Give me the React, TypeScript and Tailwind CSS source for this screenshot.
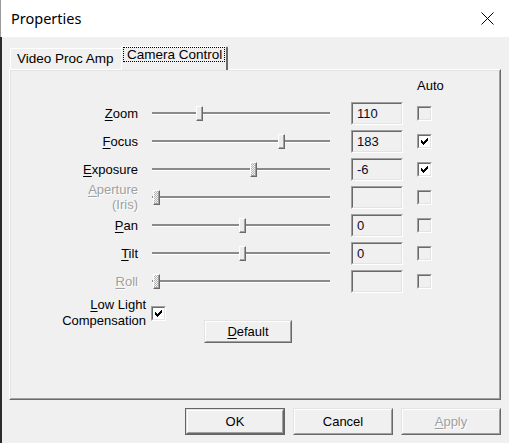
import type { ReactNode } from "react"

interface Row {
  label: ReactNode
  value: string
  thumb: number
  auto: boolean
  disabled?: boolean
  dotted?: boolean
}

const U = ({ children }: { children: ReactNode }) => <span className="underline underline-offset-[2px]">{children}</span>

const rows: Row[] = [
  { label: <><U>Z</U>oom</>, value: "110", thumb: 44, auto: false },
  { label: <><U>F</U>ocus</>, value: "183", thumb: 126, auto: true },
  { label: <><U>E</U>xposure</>, value: "-6", thumb: 98, auto: true, dotted: true },
  {
    label: (
      <>
        <U>A</U>perture
        <br />
        (Iris)
      </>
    ),
    value: "",
    thumb: 1,
    auto: false,
    disabled: true,
    dotted: true,
  },
  { label: <><U>P</U>an</>, value: "0", thumb: 87, auto: false },
  { label: <><U>T</U>ilt</>, value: "0", thumb: 87, auto: false },
  { label: <><U>R</U>oll</>, value: "", thumb: 1, auto: false, disabled: true, dotted: true },
]

function Check() {
  // classic 7x7 tick
  const cells = [
    [6, 0, 1], [5, 1, 2], [0, 2, 1], [4, 2, 3], [0, 3, 2], [3, 3, 3], [0, 4, 5], [1, 5, 3], [2, 6, 1],
  ]
  return (
    <svg width="7" height="7" viewBox="0 0 7 7" shapeRendering="crispEdges">
      {cells.map(([x, y, w], i) => (
        <rect key={i} x={x} y={y} width={w} height={1} fill="#000" />
      ))}
    </svg>
  )
}

function CheckBox({ checked }: { checked: boolean }) {
  return (
    <div className="w-[15px] h-[15px] border border-t-[#a0a0a0] border-l-[#a0a0a0] border-r-white border-b-white">
      <div
        className={`w-full h-full border border-t-[#696969] border-l-[#696969] border-r-[#e3e3e3] border-b-[#e3e3e3] flex items-center justify-center ${
          checked ? "bg-white" : "bg-[#f0f0f0]"
        }`}
      >
        {checked && <Check />}
      </div>
    </div>
  )
}

function Slider({ thumb, dotted }: { thumb: number; dotted?: boolean }) {
  return (
    <div className="relative w-[178px] h-[15px] flex items-center">
      <div className="w-full h-[3px] bg-[#8a8a8a] border-b border-white" />
      <div
        className="absolute top-0 w-[7px] h-[15px] border border-t-white border-l-white border-r-[#696969] border-b-[#696969]"
        style={{ left: thumb }}
      >
        <div
          className={`w-full h-full border-r border-b border-[#a0a0a0] ${
            dotted
              ? "bg-[image:repeating-conic-gradient(#b4b4b4_0%_25%,#f4f4f4_0%_50%)] bg-[length:2px_2px]"
              : "bg-[#ececec]"
          }`}
        />
      </div>
    </div>
  )
}

function Button({ children, isDefault, disabled, className = "" }: { children: ReactNode; isDefault?: boolean; disabled?: boolean; className?: string }) {
  const face = (
    <div className="w-full h-full border border-t-[#e3e3e3] border-l-[#e3e3e3] border-r-[#696969] border-b-[#696969]">
      <div
        className={`w-full h-full border border-t-white border-l-white border-r-[#a0a0a0] border-b-[#a0a0a0] flex items-center justify-center ${
          disabled ? "text-[#a0a0a0] [text-shadow:1px_1px_0_#fff]" : "text-black"
        }`}
      >
        {children}
      </div>
    </div>
  )
  return (
    <div className={`${className} ${isDefault ? "border border-[#646464]" : ""}`}>{face}</div>
  )
}

export default function App() {
  return (
    <div className="w-[509px] h-[443px] bg-[#f0f0f0] flex flex-col overflow-hidden font-['Liberation_Sans',Arial,sans-serif] text-[13px] leading-[15px] text-black">
      {/* title bar */}
      <div className="h-[37px] shrink-0 bg-white flex items-center pl-[10px] pr-[15px] border-l border-[#9a9a9a]">
        <span className="font-['Noto_Sans',sans-serif] text-[14.5px] text-black">Properties</span>
        <svg className="ml-auto" width="13" height="13" viewBox="0 0 13 13">
          <path d="M0.5 0.5 L12.5 12.5 M12.5 0.5 L0.5 12.5" stroke="#000" strokeWidth="1" />
        </svg>
      </div>

      <div className="flex-1 flex flex-col border-l-2 border-[#2b2b2b] pl-[7px]">
        {/* tabs */}
        <div className="h-[32px] shrink-0 flex items-end">
          <div className="ml-[1px] w-[111px] h-[21px] border-t border-l border-white rounded-tl-[2px] pl-[6px] pt-[2px] whitespace-nowrap text-[13.5px]">
            Video Proc Amp
          </div>
          <div className="relative z-10 -mb-[1px] w-[107px] h-[24px] bg-[#f0f0f0] border-t border-l border-white border-r-2 border-r-[#696969] rounded-tr-[2px]">
            <div className="ml-[1px] w-[102px] h-[15px] border border-dotted border-black pl-[3px] leading-[13px] whitespace-nowrap text-[13.5px]">
              Camera Control
            </div>
          </div>
        </div>

        {/* panel */}
        <div className="w-[492px] h-[331px] shrink-0 border border-t-white border-l-white border-r-[#696969] border-b-[#696969]">
          <div className="w-full h-full border border-t-[#e3e3e3] border-l-[#e3e3e3] border-r-[#a0a0a0] border-b-[#a0a0a0] flex flex-col">
            <div className="h-[28px] pt-[7px] pl-[406px]">Auto</div>

            {rows.map((r, i) => (
              <div key={i} className="h-[28px] flex items-center">
                <div
                  className={`w-[127px] text-right ${
                    r.disabled ? "text-[#a0a0a0] [text-shadow:1px_1px_0_#fff]" : ""
                  }`}
                >
                  {r.label}
                </div>
                <div className="ml-[14px]">
                  <Slider thumb={r.thumb} dotted={r.dotted} />
                </div>
                <div className="ml-[21px] w-[52px] h-[23px] border border-t-[#a0a0a0] border-l-[#a0a0a0] border-r-white border-b-white">
                  <div className="w-full h-full border border-t-[#696969] border-l-[#696969] border-r-[#e3e3e3] border-b-[#e3e3e3] flex items-center pl-[4px] text-[#0a0a2a]">
                    {r.value}
                  </div>
                </div>
                <div className="ml-[14px]">
                  <CheckBox checked={r.auto} />
                </div>
              </div>
            ))}

            <div className="flex items-start">
              <div className="mt-[2px] w-[135px] text-right leading-[16px]">
                <U>L</U>ow Light
                <br />
                Compensation
              </div>
              <div className="ml-[5px] mt-[11px]">
                <CheckBox checked />
              </div>
              <Button className="ml-[38px] mt-[25px] w-[88px] h-[23px]">
                <span>
                  <U>D</U>efault
                </span>
              </Button>
            </div>
          </div>
        </div>

        {/* dialog buttons */}
        <div className="w-[492px] pt-[8px] flex justify-end gap-[8px]">
          <Button isDefault className="w-[100px] h-[27px]">OK</Button>
          <Button className="w-[100px] h-[27px]">Cancel</Button>
          <Button disabled className="w-[100px] h-[27px]">
            <span>
              <U>A</U>pply
            </span>
          </Button>
        </div>
      </div>
    </div>
  )
}
